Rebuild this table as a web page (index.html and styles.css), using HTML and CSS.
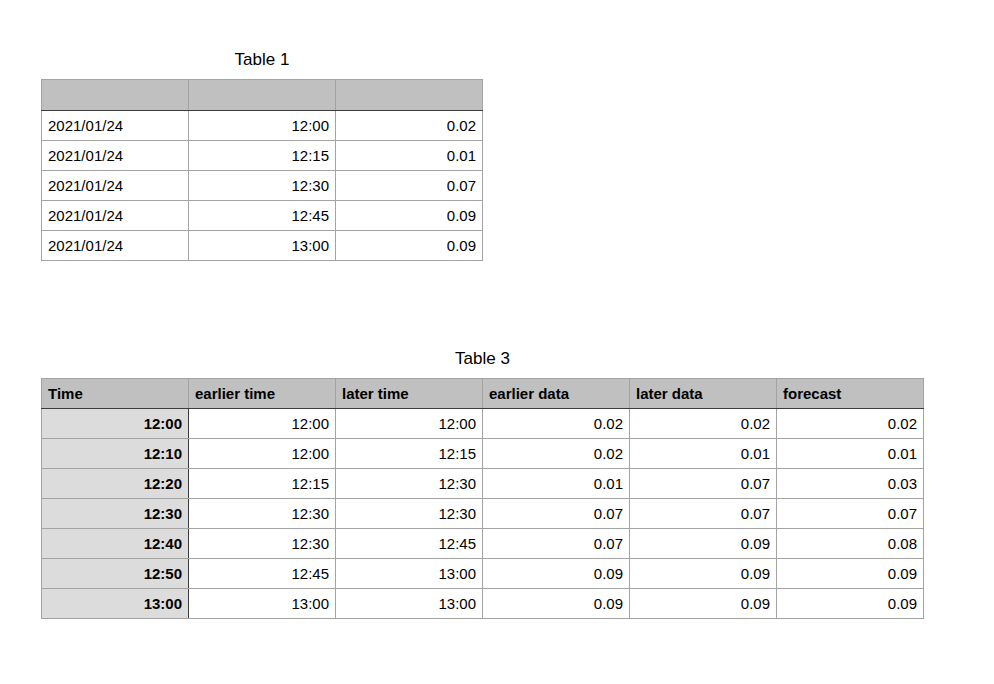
FILE: index.html
```html
<!DOCTYPE html>
<html>
<head>
<meta charset="utf-8">
<link rel="stylesheet" href="styles.css">
</head>
<body>
<div class="page">
  <table class="sheet t1">
    <caption>Table 1</caption>
    <thead>
      <tr><th></th><th></th><th></th></tr>
    </thead>
    <tbody>
      <tr><td>2021/01/24</td><td class="num">12:00</td><td class="num">0.02</td></tr>
      <tr><td>2021/01/24</td><td class="num">12:15</td><td class="num">0.01</td></tr>
      <tr><td>2021/01/24</td><td class="num">12:30</td><td class="num">0.07</td></tr>
      <tr><td>2021/01/24</td><td class="num">12:45</td><td class="num">0.09</td></tr>
      <tr><td>2021/01/24</td><td class="num">13:00</td><td class="num">0.09</td></tr>
    </tbody>
  </table>

  <table class="sheet t3">
    <caption>Table 3</caption>
    <thead>
      <tr><th>Time</th><th>earlier time</th><th>later time</th><th>earlier data</th><th>later data</th><th>forecast</th></tr>
    </thead>
    <tbody>
      <tr><th class="rowhead">12:00</th><td class="num">12:00</td><td class="num">12:00</td><td class="num">0.02</td><td class="num">0.02</td><td class="num">0.02</td></tr>
      <tr><th class="rowhead">12:10</th><td class="num">12:00</td><td class="num">12:15</td><td class="num">0.02</td><td class="num">0.01</td><td class="num">0.01</td></tr>
      <tr><th class="rowhead">12:20</th><td class="num">12:15</td><td class="num">12:30</td><td class="num">0.01</td><td class="num">0.07</td><td class="num">0.03</td></tr>
      <tr><th class="rowhead">12:30</th><td class="num">12:30</td><td class="num">12:30</td><td class="num">0.07</td><td class="num">0.07</td><td class="num">0.07</td></tr>
      <tr><th class="rowhead">12:40</th><td class="num">12:30</td><td class="num">12:45</td><td class="num">0.07</td><td class="num">0.09</td><td class="num">0.08</td></tr>
      <tr><th class="rowhead">12:50</th><td class="num">12:45</td><td class="num">13:00</td><td class="num">0.09</td><td class="num">0.09</td><td class="num">0.09</td></tr>
      <tr><th class="rowhead">13:00</th><td class="num">13:00</td><td class="num">13:00</td><td class="num">0.09</td><td class="num">0.09</td><td class="num">0.09</td></tr>
    </tbody>
  </table>
</div>
</body>
</html>
```

FILE: styles.css
```css
html, body {
  margin: 0;
  padding: 0;
  background: #ffffff;
}

body {
  font-family: "Liberation Sans", Arial, Helvetica, sans-serif;
  color: #000000;
}

.page {
  padding: 49px 0 0 41px;
  display: flex;
  flex-direction: column;
  align-items: flex-start;
}

.sheet {
  border-collapse: collapse;
  table-layout: fixed;
  font-size: 15px;
}

.sheet caption {
  font-size: 17px;
  line-height: 20px;
  padding: 1px 0 9px 0;
  text-align: center;
}

.t1 {
  width: 442px;
}

.t3 {
  width: 883px;
  margin-top: 87px;
}

.sheet th,
.sheet td {
  border: 1px solid #a3a3a3;
  height: 29px;
  padding: 0 6px 0 6px;
  text-align: left;
  vertical-align: middle;
  line-height: 17px;
  white-space: nowrap;
}

.sheet thead th {
  background: #bfc0bf;
  font-weight: bold;
  height: 29px;
  border-bottom: 1px solid #3c3c3c;
}

.t1 thead th {
  height: 30px;
}

.sheet td.num {
  text-align: right;
}

.sheet th.rowhead {
  background: #dcdcdc;
  font-weight: bold;
  text-align: right;
  border-right: 1px solid #3c3c3c;
}
```
